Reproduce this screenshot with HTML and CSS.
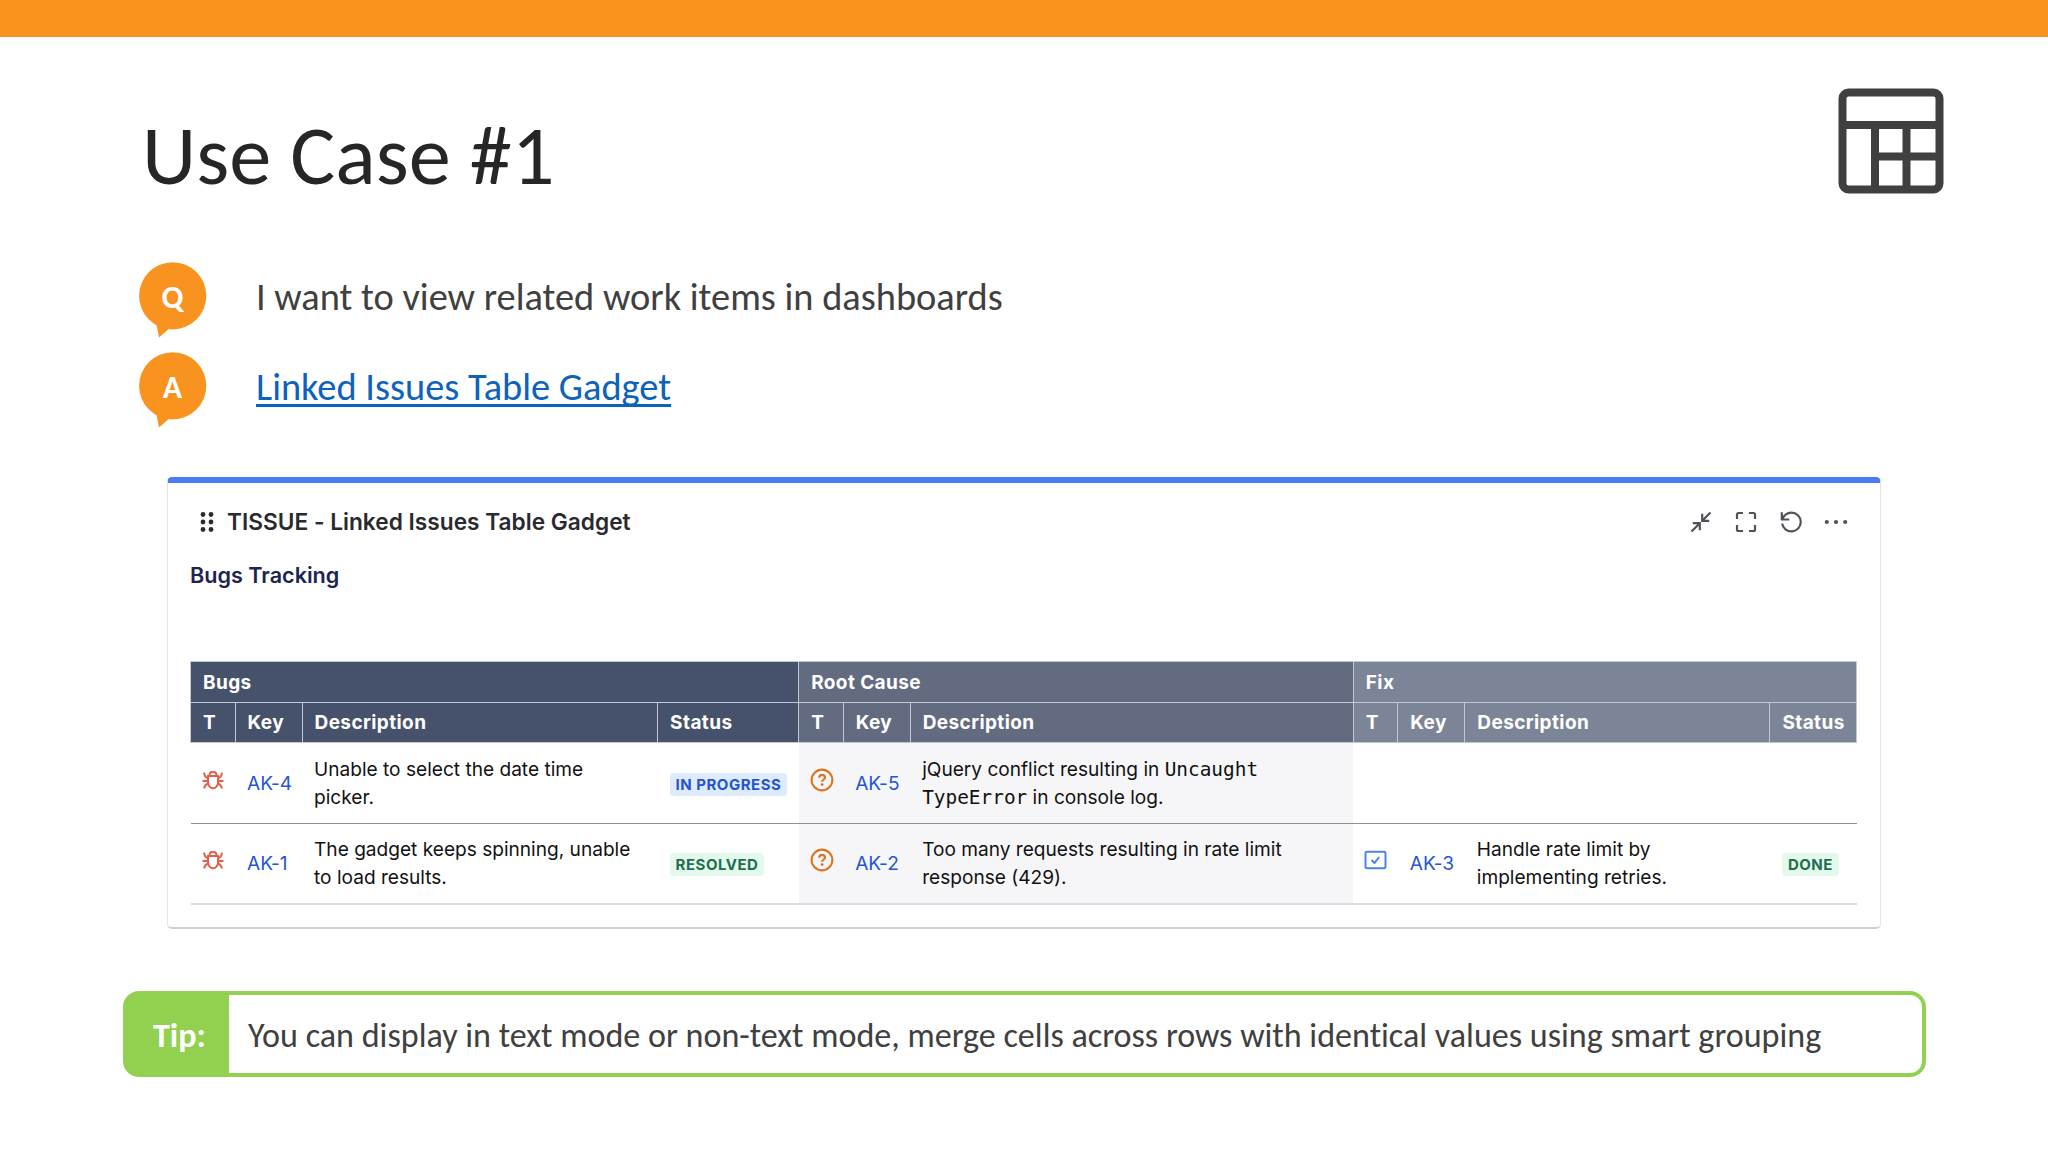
FILE: index.html
```html
<!DOCTYPE html>
<html lang="en">
<head>
<meta charset="UTF-8">
<meta name="viewport" content="width=device-width, initial-scale=1.0">
<title>Use Case #1</title>
<link rel="stylesheet" href="styles.css">
</head>
<body>

<!-- shared icons -->
<svg class="sprite">
  <symbol id="bubble" viewBox="0 0 68 76">
    <circle cx="33.700" cy="33.800" r="33.600" fill="#f9931f"/>
    <path fill="#f9931f" d="M17 60L20 75.500L32 65z"/>
  </symbol>
  <symbol id="bug" viewBox="0 0 22 20">
    <g fill="none" stroke="#e2604c" stroke-width="2">
      <path d="M6 6h10v6.500c0 3.500-2.500 5.700-5 5.700s-5-2.200-5-5.700z"/>
      <path d="M7.600 6V4.800A2.800 2.800 0 0 1 10.400 2h1.200a2.800 2.800 0 0 1 2.800 2.800V6"/>
      <path d="M6 8.300C3.500 7.600 2.300 6 2.100 2.500M16 8.300c2.500-.7 3.700-2.300 3.900-5.800M.5 11H6M16 11h5.500M6.300 13.500C3.700 14.200 2.600 15.500 2.100 18.500M15.700 13.500c2.600.7 3.700 2 4.200 5"/>
    </g>
  </symbol>
  <symbol id="question" viewBox="0 0 24 24">
    <g fill="none" stroke="#d97523" stroke-width="2.100">
      <circle cx="12" cy="12" r="10.400"/>
      <path d="M9.200 9.800c0-1.800 1.200-2.900 2.900-2.900s2.900 1.100 2.900 2.600c0 2-2.900 2-2.900 4.300"/>
    </g>
    <circle cx="12.100" cy="16.600" r="1.400" fill="#d97523"/>
  </symbol>
  <symbol id="task" viewBox="0 0 22 20">
    <g fill="none" stroke="#4c82e6" stroke-width="2">
      <rect x="1" y="1.800" width="20" height="16.400" rx="1.600"/>
      <path d="M7 10l3 3 4.700-6"/>
    </g>
  </symbol>
</svg>

<div class="topbar"></div>

<div class="slide">
  <div class="heading">
    <h1>Use Case #1</h1>
    <svg class="logo" viewBox="0 0 106 106">
      <g fill="none" stroke="#404040" stroke-width="8">
        <rect x="4.500" y="4.500" width="97" height="97" rx="6"/>
        <path d="M4 37h98M37 37v65M68.500 37v65M37 68.500h65"/>
      </g>
    </svg>
  </div>

  <div class="qa">
    <div class="bubble"><svg><use href="#bubble"/></svg><b>Q</b></div>
    <p>I want to view related work items in dashboards</p>
  </div>
  <div class="qa">
    <div class="bubble"><svg><use href="#bubble"/></svg><b>A</b></div>
    <p><a href="#">Linked Issues Table Gadget</a></p>
  </div>

  <div class="gadget">
    <div class="gadget-header">
      <svg class="grip" width="14" height="20" viewBox="0 0 14 20" fill="#292a2e">
        <circle cx="3" cy="2.500" r="2.400"/><circle cx="11" cy="2.500" r="2.400"/>
        <circle cx="3" cy="10" r="2.400"/><circle cx="11" cy="10" r="2.400"/>
        <circle cx="3" cy="17.500" r="2.400"/><circle cx="11" cy="17.500" r="2.400"/>
      </svg>
      <h2>TISSUE - Linked Issues Table Gadget</h2>
      <div class="actions">
        <svg viewBox="0 0 24 24">
          <path d="M21.500 2.500L14 10M13.200 3.800v7H20.200M2.500 21.500L10 14M3.800 13.200h7V20.200"/>
        </svg>
        <svg viewBox="0 0 24 24">
          <path d="M3 9V4.500A1.500 1.500 0 0 1 4.500 3H9M15 3h4.500A1.500 1.500 0 0 1 21 4.500V9M21 15v4.500a1.500 1.500 0 0 1-1.500 1.500H15M9 21H4.500A1.500 1.500 0 0 1 3 19.500V15"/>
        </svg>
        <svg viewBox="0 0 24 24">
          <path d="M2.800 2.200v7.300h7.500M3 9.500C5 5 8.300 2.600 12.500 2.600a9.400 9.400 0 1 1-9.400 11"/>
        </svg>
        <svg viewBox="0 0 24 24" class="dots">
          <circle cx="2.800" cy="12" r="2.100"/><circle cx="12" cy="12" r="2.100"/><circle cx="21.200" cy="12" r="2.100"/>
        </svg>
      </div>
    </div>

    <h3>Bugs Tracking</h3>

    <table>
      <colgroup>
        <col class="c-type"><col class="c-key"><col class="c-desc1"><col class="c-status1">
        <col class="c-type"><col class="c-key"><col class="c-desc2">
        <col class="c-type"><col class="c-key"><col class="c-desc3"><col class="c-status3">
      </colgroup>
      <thead>
        <tr>
          <th colspan="4" class="bugs">Bugs</th>
          <th colspan="3" class="cause">Root Cause</th>
          <th colspan="4" class="fix">Fix</th>
        </tr>
        <tr>
          <th class="bugs">T</th>
          <th class="bugs">Key</th>
          <th class="bugs">Description</th>
          <th class="bugs">Status</th>
          <th class="cause">T</th>
          <th class="cause">Key</th>
          <th class="cause">Description</th>
          <th class="fix">T</th>
          <th class="fix">Key</th>
          <th class="fix">Description</th>
          <th class="fix">Status</th>
        </tr>
      </thead>
      <tbody>
        <tr>
          <td class="type"><svg class="i-bug"><use href="#bug"/></svg></td>
          <td class="key"><a href="#">AK-4</a></td>
          <td>Unable to select the date time<br>picker.</td>
          <td class="status"><span class="badge progress">IN PROGRESS</span></td>
          <td class="type shade"><svg class="i-question"><use href="#question"/></svg></td>
          <td class="key shade"><a href="#">AK-5</a></td>
          <td class="shade">jQuery conflict resulting in <code>Uncaught<br>TypeError</code> in console log.</td>
          <td></td>
          <td></td>
          <td></td>
          <td></td>
        </tr>
        <tr>
          <td class="type"><svg class="i-bug"><use href="#bug"/></svg></td>
          <td class="key"><a href="#">AK-1</a></td>
          <td>The gadget keeps spinning, unable<br>to load results.</td>
          <td class="status"><span class="badge done">RESOLVED</span></td>
          <td class="type shade"><svg class="i-question"><use href="#question"/></svg></td>
          <td class="key shade"><a href="#">AK-2</a></td>
          <td class="shade">Too many requests resulting in rate limit<br>response (429).</td>
          <td class="type"><svg class="i-task"><use href="#task"/></svg></td>
          <td class="key"><a href="#">AK-3</a></td>
          <td>Handle rate limit by<br>implementing retries.</td>
          <td class="status"><span class="badge done">DONE</span></td>
        </tr>
      </tbody>
    </table>
  </div>

  <div class="tip">
    <div class="tip-label">Tip:</div>
    <div class="tip-text">You can display in text mode or non-text mode, merge cells across rows with identical values using smart grouping</div>
  </div>
</div>

</body>
</html>
```
FILE: styles.css
```css
* {
  box-sizing: border-box;
}

body {
  margin: 0;
  height: 1152px;
  overflow: hidden;
  background: #fff;
  color: #404040;
  font-family: Carlito, Calibri, Lato, sans-serif;
  font-variant-ligatures: none;
}

h1, h2, h3, p {
  margin: 0;
}

.sprite {
  display: none;
}

.topbar {
  height: 37px;
  background: #f9931f;
}

.slide {
  padding: 51px 105px 0 123px;
}

/* Title */
.heading {
  display: flex;
  justify-content: space-between;
  height: 174px;
  padding-left: 19px;
}

.heading h1 {
  color: #262626;
  font-size: 84.4px;
  font-weight: 400;
  line-height: 104px;
  padding-top: 16px;
}

.logo {
  width: 106px;
  height: 106px;
  margin-right: -1px;
}

/* Question and answer */
.qa {
  display: flex;
  height: 90px;
  padding-left: 16px;
}

.bubble {
  position: relative;
  width: 68px;
  height: 76px;
}

.bubble svg {
  width: 68px;
  height: 76px;
}

.bubble b {
  position: absolute;
  top: 0;
  left: 0;
  width: 67px;
  line-height: 72px;
  text-align: center;
  font-size: 32px;
  color: #fff;
}

.qa p {
  padding-left: 49px;
  font-size: 38.4px;
  line-height: 69px;
}

.qa a {
  color: #0d62bb;
  text-decoration-thickness: 3px;
  text-underline-offset: 4px;
  text-decoration-skip-ink: none;
}

/* Gadget */
.gadget {
  width: 1714px;
  height: 452px;
  margin: 35px 0 0 44px;
  padding: 0 23px 0 22px;
  border: 1px solid #e3e4e6;
  border-top: 6px solid #4a7df3;
  border-bottom: 2px solid #cfd0d2;
  border-radius: 5px;
  font-family: Inter, sans-serif;
}

.gadget-header {
  display: flex;
  align-items: center;
  height: 78px;
  padding: 0 9px 0 10px;
}

.gadget-header h2 {
  padding: 0 0 2px 13px;
  color: #292a2e;
  font-size: 22.7px;
  font-weight: 600;
}

.actions {
  display: flex;
  gap: 21px;
  margin-left: auto;
}

.actions svg {
  width: 24px;
  height: 24px;
  fill: none;
  stroke: #505258;
  stroke-width: 2.2;
}

.actions .dots {
  fill: #505258;
  stroke: none;
}

.gadget h3 {
  height: 100px;
  color: #1c2452;
  font-size: 21.6px;
  font-weight: 600;
  line-height: 28px;
}

table {
  width: 1667px;
  table-layout: fixed;
  border-collapse: collapse;
  color: #111;
  font-size: 19.1px;
  line-height: 28px;
}

.c-type { width: 44.5px; }
.c-key { width: 67px; }
.c-desc1 { width: 355.5px; }
.c-status1 { width: 141px; }
.c-desc2 { width: 443px; }
.c-desc3 { width: 305px; }
.c-status3 { width: 86.5px; }

th {
  height: 40.5px;
  padding: 2px 11px 0 12px;
  border: 1px solid #c3c8d4;
  color: #fff;
  font-size: 19px;
  font-weight: 700;
  letter-spacing: 0.4px;
  text-align: left;
}

.bugs { background: #46526c; }
.cause { background: #626b80; }
.fix { background: #7c8597; }

td {
  height: 81px;
  padding: 0 11px 0 12px;
  border-bottom: 1px solid #8c8f94;
}

tbody tr:last-child td {
  height: 80px;
  border-bottom: 2px solid #dcdde0;
}

.shade {
  background: #f6f6f9;
}

.type svg {
  display: block;
  margin: 0 0 7px -1px;
}

.i-bug {
  width: 22px;
  height: 20px;
}

.i-question {
  width: 24px;
  height: 24px;
}

.i-task {
  width: 23px;
  height: 20px;
}

.key {
  white-space: nowrap;
}

.key a {
  color: #2456cf;
  text-decoration: none;
}

code {
  font-family: "DejaVu Sans Mono", monospace;
  font-size: 19.4px;
  line-height: 1;
}

.badge {
  display: inline-block;
  padding: 0 6px;
  border-radius: 4px;
  font-size: 15px;
  font-weight: 700;
  letter-spacing: 0.5px;
  line-height: 23px;
  white-space: nowrap;
}

.progress {
  background: #deeafd;
  color: #2355cd;
}

.done {
  background: #e2f9ec;
  color: #216e4e;
}

/* Tip */
.tip {
  display: flex;
  width: 1803px;
  height: 86px;
  margin-top: 62px;
  border: 4px solid #92d050;
  border-radius: 16px;
  background: #92d050;
  font-size: 34.1px;
  line-height: 81px;
}

.tip-label {
  width: 102px;
  padding-left: 26px;
  color: #fff;
  font-weight: 700;
}

.tip-text {
  flex: 1;
  padding-left: 19px;
  border-radius: 0 12px 12px 0;
  background: #fff;
  white-space: nowrap;
}
```
